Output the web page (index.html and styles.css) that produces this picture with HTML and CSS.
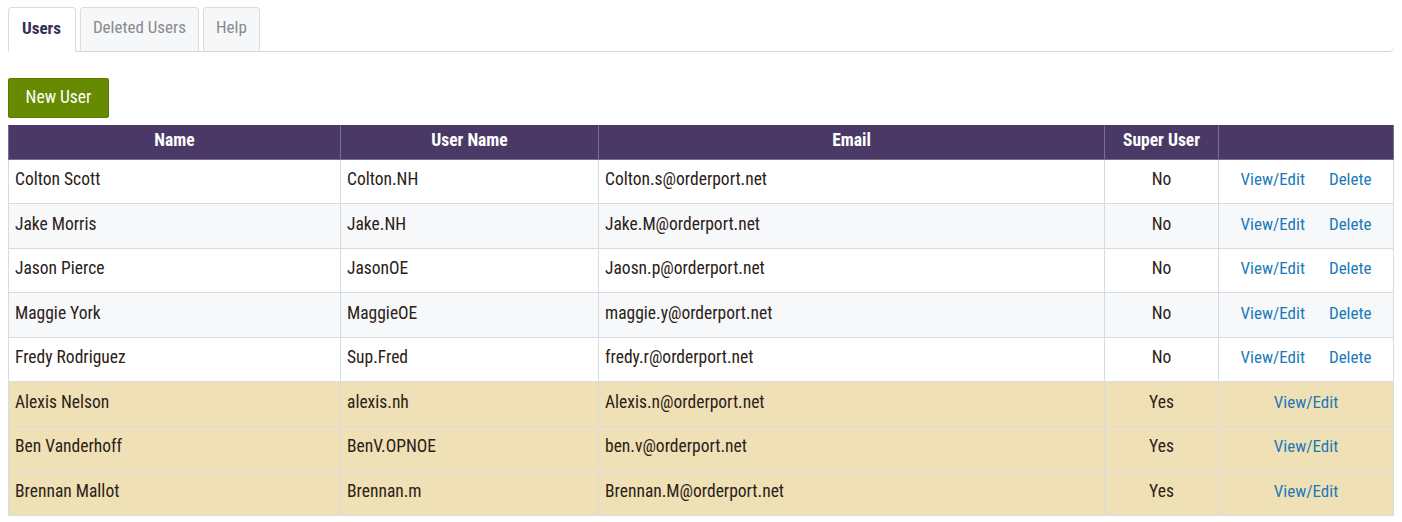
FILE: index.html
```html
<!DOCTYPE html>
<html lang="en">
<head>
    <meta charset="UTF-8">
    <title>Users</title>
    <link rel="stylesheet" href="styles.css">
</head>
<body>
    <!-- Pestañas -->
    <ul class="tabs">
        <li class="tab active">Users</li>
        <li class="tab">Deleted Users</li>
        <li class="tab">Help</li>
    </ul>

    <div class="toolbar">
        <button class="btn-new">New User</button>
    </div>

    <table class="users-table">
        <colgroup>
            <col style="width: 332px">
            <col style="width: 258px">
            <col style="width: 506px">
            <col style="width: 114px">
            <col>
        </colgroup>
        <thead>
            <tr>
                <th>Name</th>
                <th>User Name</th>
                <th>Email</th>
                <th>Super User</th>
                <th></th>
            </tr>
        </thead>
        <tbody>
            <tr>
                <td>Colton Scott</td><td>Colton.NH</td><td>Colton.s@orderport.net</td><td class="center">No</td>
                <td class="actions"><a href="#">View/Edit</a><a href="#">Delete</a></td>
            </tr>
            <tr>
                <td>Jake Morris</td><td>Jake.NH</td><td>Jake.M@orderport.net</td><td class="center">No</td>
                <td class="actions"><a href="#">View/Edit</a><a href="#">Delete</a></td>
            </tr>
            <tr>
                <td>Jason Pierce</td><td>JasonOE</td><td>Jaosn.p@orderport.net</td><td class="center">No</td>
                <td class="actions"><a href="#">View/Edit</a><a href="#">Delete</a></td>
            </tr>
            <tr>
                <td>Maggie York</td><td>MaggieOE</td><td>maggie.y@orderport.net</td><td class="center">No</td>
                <td class="actions"><a href="#">View/Edit</a><a href="#">Delete</a></td>
            </tr>
            <tr>
                <td>Fredy Rodriguez</td><td>Sup.Fred</td><td>fredy.r@orderport.net</td><td class="center">No</td>
                <td class="actions"><a href="#">View/Edit</a><a href="#">Delete</a></td>
            </tr>
            <tr class="super">
                <td>Alexis Nelson</td><td>alexis.nh</td><td>Alexis.n@orderport.net</td><td class="center">Yes</td>
                <td class="actions"><a href="#">View/Edit</a></td>
            </tr>
            <tr class="super">
                <td>Ben Vanderhoff</td><td>BenV.OPNOE</td><td>ben.v@orderport.net</td><td class="center">Yes</td>
                <td class="actions"><a href="#">View/Edit</a></td>
            </tr>
            <tr class="super">
                <td>Brennan Mallot</td><td>Brennan.m</td><td>Brennan.M@orderport.net</td><td class="center">Yes</td>
                <td class="actions"><a href="#">View/Edit</a></td>
            </tr>
        </tbody>
    </table>
</body>
</html>
```

FILE: styles.css
```css
* {
    margin: 0;
    padding: 0;
    box-sizing: border-box;
}

body {
    font-family: 'Roboto Condensed', sans-serif;
    font-size: 17px;
    color: #2b2118;
    background: #fff;
    padding: 7px 8px;
}

/* Pestañas */
.tabs {
    list-style: none;
    display: flex;
    gap: 4px;
    width: 1386px;
    border-bottom: 1px solid #d6d6d6;
    border-bottom-right-radius: 5px;
}

.tab {
    height: 44px;
    padding: 0 12px 5px;
    display: flex;
    align-items: center;
    border: 1px solid #dcdcdc;
    border-bottom: none;
    border-radius: 4px 4px 0 0;
    background: #f6f7f8;
    color: #8a8a8f;
    margin-bottom: -1px;
}

.tab.active {
    background: #fff;
    color: #3a2c55;
    font-weight: bold;
    height: 45px;
    padding: 0 14px 5px 13px;
}

.toolbar {
    padding: 26px 0 7px;
}

.btn-new {
    font-family: inherit;
    font-size: 17.5px;
    color: #fff;
    background: #668a00;
    border: 1px solid #5a7a00;
    border-radius: 2px;
    width: 101px;
    height: 40px;
    padding-bottom: 2px;
    cursor: pointer;
}

/* Tabla de usuarios */
.users-table {
    width: 1386px;
    border-collapse: collapse;
    table-layout: fixed;
}

.users-table th {
    background: #4a3966;
    color: #fff;
    font-weight: bold;
    height: 34px;
    padding-bottom: 3px;
    border: 1px solid #7a6d8e;
    border-top: none;
    font-size: 17.5px;
}

.users-table td {
    height: 44.5px;
    padding: 0 6px 4px;
    border: 1px solid #d7dbe2;
    font-size: 17.5px;
}

.users-table tbody tr:nth-child(even) {
    background: #f7f8fa;
}

.users-table tbody tr.super {
    background: #f0e0b5;
}

.center {
    text-align: center;
}

.actions {
    text-align: center;
}

.actions a {
    color: #1b7ab8;
    text-decoration: none;
    margin: 0 12px;
    font-size: 17px;
}
```
